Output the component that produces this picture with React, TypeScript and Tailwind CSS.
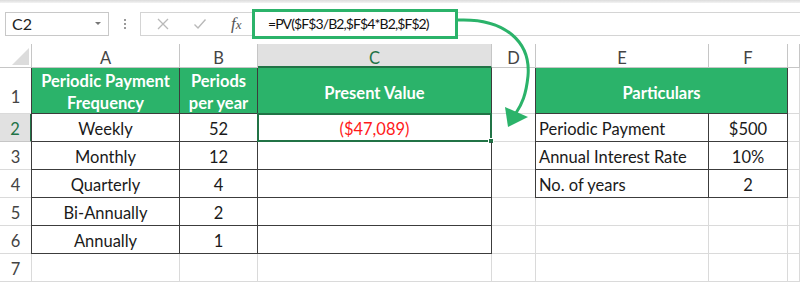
import React from 'react';

const font = { fontFamily: 'Lato, "Liberation Sans", sans-serif' };

const cols = ['A', 'B', 'C', 'D', 'E', 'F', ''];

type Row = {
  n: number;
  freq?: string;
  per?: string;
  pv?: string;
  label?: string;
  value?: string;
};

const rows: Row[] = [
  { n: 2, freq: 'Weekly', per: '52', pv: '($47,089)', label: 'Periodic Payment', value: '$500' },
  { n: 3, freq: 'Monthly', per: '12', label: 'Annual Interest Rate', value: '10%' },
  { n: 4, freq: 'Quarterly', per: '4', label: 'No. of years', value: '2' },
  { n: 5, freq: 'Bi-Annually', per: '2' },
  { n: 6, freq: 'Annually', per: '1' },
  { n: 7 },
];

function Toolbar() {
  return (
    <div className="h-[44px] bg-white">
      <div className="h-[3px] bg-gradient-to-b from-[#dcdcdc] to-[#f3f3f3]" />
      <div className="flex items-center h-[41px]">
        {/* name box */}
        <div className="ml-[5px] w-[104px] h-[24px] border border-[#c8c8c8] flex items-center justify-between pl-[6px] pr-[7px] text-[16px] text-[#222]">
          <span>C2</span>
          <span className="w-0 h-0 border-l-[3px] border-r-[3px] border-t-[3px] border-l-transparent border-r-transparent border-t-[#777]" />
        </div>
        <div className="w-[31px] flex flex-col items-center gap-[2px]">
          <span className="w-[2px] h-[2px] bg-[#9a9a9a]" />
          <span className="w-[2px] h-[2px] bg-[#9a9a9a]" />
          <span className="w-[2px] h-[2px] bg-[#9a9a9a]" />
        </div>
        {/* function buttons */}
        <div className="w-[112px] h-[24px] border border-[#d4d4d4] border-r-0 flex items-center">
          <svg width="14" height="14" viewBox="0 0 14 14" className="ml-[15px]">
            <path d="M2 2 L12 12 M12 2 L2 12" stroke="#b9b9b9" strokeWidth="1.3" />
          </svg>
          <svg width="14" height="12" viewBox="0 0 14 12" className="ml-[23px]">
            <path d="M1.5 6.5 L5 10 L12.5 1.5" stroke="#b9b9b9" strokeWidth="1.4" fill="none" />
          </svg>
          <span
            className="ml-[24px] text-[17px] italic text-[#555]"
            style={{ fontFamily: '"Liberation Serif", serif' }}
          >
            f<span className="text-[13px]">x</span>
          </span>
        </div>
        {/* formula */}
        <div className="w-[206px] h-[30px] border-[3px] border-[#2bb36a] flex items-center pl-[13px] text-[14px] tracking-[-0.9px] text-[#111] whitespace-nowrap">
          =PV($F$3/B2,$F$4*B2,$F$2)
        </div>
        <div className="flex-1 h-[24px] border-t border-b border-[#d4d4d4]" />
      </div>
    </div>
  );
}

function Sheet() {
  const grid = 'border-r border-b border-[#dadada]';
  const dark = 'border-r border-b border-[#3c3c3c]';
  const green = 'bg-[#2bb36a] text-white font-bold';
  return (
    <div className="grid grid-cols-[32px_148px_78px_234px_44px_173px_79px_12px] grid-rows-[24px_46px_28px_28px_28px_28px_28px_28px] text-[16.5px] text-[#1a1a1a]">
      {/* column headers */}
      <div className="border-r border-b border-[#c6c6c6] flex items-end justify-end pr-[2px] pb-[2px]">
        <svg width="17" height="17" viewBox="0 0 17 17">
          <path d="M17 0 L17 17 L0 17 Z" fill="#dcdcdc" />
        </svg>
      </div>
      {cols.map((c) =>
        c === 'C' ? (
          <div key="C" className="bg-[#e1e1e1] border-r border-[#c6c6c6] border-b-2 border-b-[#217346] flex items-center justify-center pt-[6px] text-[#217346]">
            C
          </div>
        ) : (
          <div key={c || 'g'} className="border-r border-b border-[#c6c6c6] flex items-center justify-center pt-[6px] text-[#444]">
            {c}
          </div>
        )
      )}

      {/* row 1 */}
      <div className="border-r border-b border-[#dadada] flex items-end justify-center pb-[3px] text-[#444]">1</div>
      <div className={`${dark} ${green} -ml-px border-l flex flex-col items-center justify-center pt-[2px] leading-[22px]`}>
        <span>Periodic Payment</span>
        <span>Frequency</span>
      </div>
      <div className={`${dark} ${green} flex flex-col items-center justify-center pt-[2px] leading-[22px]`}>
        <span>Periods</span>
        <span>per year</span>
      </div>
      <div className={`${dark} ${green} flex items-center justify-center pt-[5px]`}>Present Value</div>
      <div className={grid} />
      <div className={`${dark} ${green} -ml-px border-l col-span-2 flex items-center justify-center pt-[5px]`}>Particulars</div>
      <div className={grid} />

      {rows.map((r) => {
        const inTable = r.n <= 6;
        const inRight = r.n <= 4;
        const sel = r.n === 2;
        return (
          <React.Fragment key={r.n}>
            <div
              className={`flex items-center justify-center pt-[4px] border-b ${
                sel
                  ? 'bg-[#e1e1e1] text-[#217346] border-r-2 border-r-[#217346] border-b-[#c6c6c6]'
                  : 'border-r border-[#dadada] text-[#444]'
              }`}
            >
              {r.n}
            </div>
            <div className={`${inTable ? `${dark} -ml-px border-l` : grid} flex items-center justify-center pt-[3px]`}>{r.freq}</div>
            <div className={`${inTable ? dark : grid} flex items-center justify-center pt-[3px]`}>{r.per}</div>
            <div className={`${inTable ? dark : grid} relative flex items-center justify-center pt-[3px] text-[#ff1a1a]`}>
              {r.pv}
              {sel && (
                <div className="absolute -left-px -top-px -right-px -bottom-px border-2 border-[#217346] pointer-events-none">
                  <span className="absolute -right-[4px] -bottom-[4px] w-[6px] h-[6px] bg-[#217346] border border-white" />
                </div>
              )}
            </div>
            <div className={grid} />
            <div className={`${inRight ? `${dark} -ml-px border-l` : grid} flex items-center pl-[3px] pt-[3px] whitespace-nowrap`}>{r.label}</div>
            <div className={`${inRight ? dark : grid} flex items-center justify-center pt-[3px]`}>{r.value}</div>
            <div className={grid} />
          </React.Fragment>
        );
      })}
    </div>
  );
}

export default function App() {
  return (
    <div className="relative w-[800px] h-[282px] overflow-hidden bg-white" style={font}>
      <Toolbar />
      <Sheet />
      {/* callout arrow from formula to result */}
      <svg className="absolute left-0 top-0 pointer-events-none" width="800" height="282" viewBox="0 0 800 282">
        <path d="M458 20 C 505 18, 531 42, 528 76 C 526 95, 522 104, 516 113" stroke="#2bb36a" strokeWidth="3" fill="none" />
        <path d="M505 107 L508 127 L528 117 Z" fill="#2bb36a" />
      </svg>
    </div>
  );
}
